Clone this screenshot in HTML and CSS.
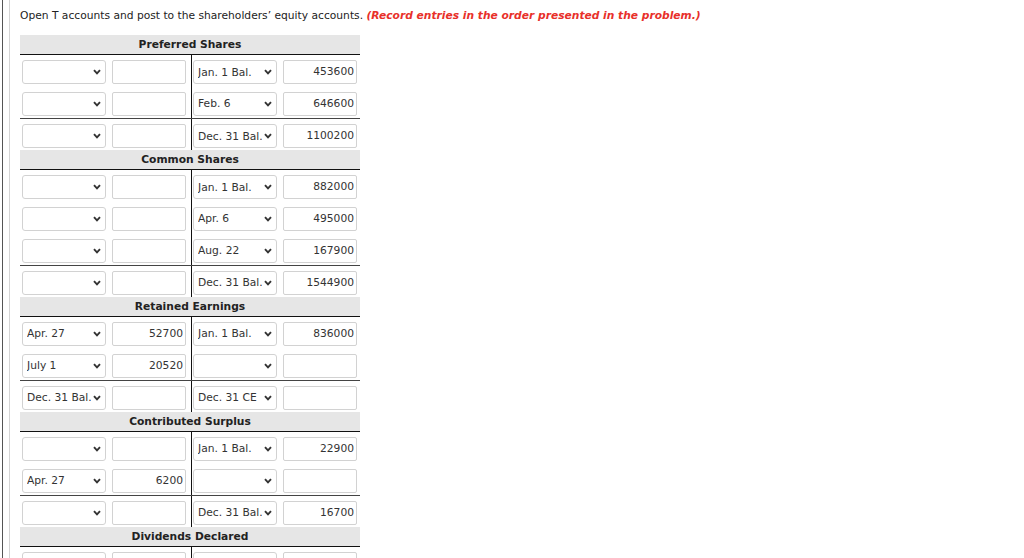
FILE: index.html
```html
<!DOCTYPE html>
<html>
<head>
<meta charset="utf-8">
<link rel="stylesheet" href="styles.css">
</head>
<body>
<div class="frame">
  <div class="panel">
    <p class="prompt">Open T accounts and post to the shareholders’ equity accounts. <em class="note">(Record entries in the order presented in the problem.)</em></p>

    <div class="taccount">
      <div class="title">Preferred Shares</div>
      <div class="row">
        <div class="side left"><div class="sel"><span></span><svg class="chev" viewBox="0 0 8 6"><path d="M1 1.2 4 4.4 7 1.2"/></svg></div><div class="amt"></div></div>
        <div class="side right"><div class="sel"><span>Jan. 1 Bal.</span><svg class="chev" viewBox="0 0 8 6"><path d="M1 1.2 4 4.4 7 1.2"/></svg></div><div class="amt">453600</div></div>
      </div>
      <div class="row">
        <div class="side left"><div class="sel"><span></span><svg class="chev" viewBox="0 0 8 6"><path d="M1 1.2 4 4.4 7 1.2"/></svg></div><div class="amt"></div></div>
        <div class="side right"><div class="sel"><span>Feb. 6</span><svg class="chev" viewBox="0 0 8 6"><path d="M1 1.2 4 4.4 7 1.2"/></svg></div><div class="amt">646600</div></div>
      </div>
      <div class="row total">
        <div class="side left"><div class="sel"><span></span><svg class="chev" viewBox="0 0 8 6"><path d="M1 1.2 4 4.4 7 1.2"/></svg></div><div class="amt"></div></div>
        <div class="side right"><div class="sel"><span>Dec. 31 Bal.</span><svg class="chev" viewBox="0 0 8 6"><path d="M1 1.2 4 4.4 7 1.2"/></svg></div><div class="amt">1100200</div></div>
      </div>
    </div>

    <div class="taccount">
      <div class="title">Common Shares</div>
      <div class="row">
        <div class="side left"><div class="sel"><span></span><svg class="chev" viewBox="0 0 8 6"><path d="M1 1.2 4 4.4 7 1.2"/></svg></div><div class="amt"></div></div>
        <div class="side right"><div class="sel"><span>Jan. 1 Bal.</span><svg class="chev" viewBox="0 0 8 6"><path d="M1 1.2 4 4.4 7 1.2"/></svg></div><div class="amt">882000</div></div>
      </div>
      <div class="row">
        <div class="side left"><div class="sel"><span></span><svg class="chev" viewBox="0 0 8 6"><path d="M1 1.2 4 4.4 7 1.2"/></svg></div><div class="amt"></div></div>
        <div class="side right"><div class="sel"><span>Apr. 6</span><svg class="chev" viewBox="0 0 8 6"><path d="M1 1.2 4 4.4 7 1.2"/></svg></div><div class="amt">495000</div></div>
      </div>
      <div class="row">
        <div class="side left"><div class="sel"><span></span><svg class="chev" viewBox="0 0 8 6"><path d="M1 1.2 4 4.4 7 1.2"/></svg></div><div class="amt"></div></div>
        <div class="side right"><div class="sel"><span>Aug. 22</span><svg class="chev" viewBox="0 0 8 6"><path d="M1 1.2 4 4.4 7 1.2"/></svg></div><div class="amt">167900</div></div>
      </div>
      <div class="row total">
        <div class="side left"><div class="sel"><span></span><svg class="chev" viewBox="0 0 8 6"><path d="M1 1.2 4 4.4 7 1.2"/></svg></div><div class="amt"></div></div>
        <div class="side right"><div class="sel"><span>Dec. 31 Bal.</span><svg class="chev" viewBox="0 0 8 6"><path d="M1 1.2 4 4.4 7 1.2"/></svg></div><div class="amt">1544900</div></div>
      </div>
    </div>

    <div class="taccount">
      <div class="title">Retained Earnings</div>
      <div class="row">
        <div class="side left"><div class="sel"><span>Apr. 27</span><svg class="chev" viewBox="0 0 8 6"><path d="M1 1.2 4 4.4 7 1.2"/></svg></div><div class="amt">52700</div></div>
        <div class="side right"><div class="sel"><span>Jan. 1 Bal.</span><svg class="chev" viewBox="0 0 8 6"><path d="M1 1.2 4 4.4 7 1.2"/></svg></div><div class="amt">836000</div></div>
      </div>
      <div class="row">
        <div class="side left"><div class="sel"><span>July 1</span><svg class="chev" viewBox="0 0 8 6"><path d="M1 1.2 4 4.4 7 1.2"/></svg></div><div class="amt">20520</div></div>
        <div class="side right"><div class="sel"><span></span><svg class="chev" viewBox="0 0 8 6"><path d="M1 1.2 4 4.4 7 1.2"/></svg></div><div class="amt"></div></div>
      </div>
      <div class="row total">
        <div class="side left"><div class="sel"><span>Dec. 31 Bal.</span><svg class="chev" viewBox="0 0 8 6"><path d="M1 1.2 4 4.4 7 1.2"/></svg></div><div class="amt"></div></div>
        <div class="side right"><div class="sel"><span>Dec. 31 CE</span><svg class="chev" viewBox="0 0 8 6"><path d="M1 1.2 4 4.4 7 1.2"/></svg></div><div class="amt"></div></div>
      </div>
    </div>

    <div class="taccount">
      <div class="title">Contributed Surplus</div>
      <div class="row">
        <div class="side left"><div class="sel"><span></span><svg class="chev" viewBox="0 0 8 6"><path d="M1 1.2 4 4.4 7 1.2"/></svg></div><div class="amt"></div></div>
        <div class="side right"><div class="sel"><span>Jan. 1 Bal.</span><svg class="chev" viewBox="0 0 8 6"><path d="M1 1.2 4 4.4 7 1.2"/></svg></div><div class="amt">22900</div></div>
      </div>
      <div class="row">
        <div class="side left"><div class="sel"><span>Apr. 27</span><svg class="chev" viewBox="0 0 8 6"><path d="M1 1.2 4 4.4 7 1.2"/></svg></div><div class="amt">6200</div></div>
        <div class="side right"><div class="sel"><span></span><svg class="chev" viewBox="0 0 8 6"><path d="M1 1.2 4 4.4 7 1.2"/></svg></div><div class="amt"></div></div>
      </div>
      <div class="row total">
        <div class="side left"><div class="sel"><span></span><svg class="chev" viewBox="0 0 8 6"><path d="M1 1.2 4 4.4 7 1.2"/></svg></div><div class="amt"></div></div>
        <div class="side right"><div class="sel"><span>Dec. 31 Bal.</span><svg class="chev" viewBox="0 0 8 6"><path d="M1 1.2 4 4.4 7 1.2"/></svg></div><div class="amt">16700</div></div>
      </div>
    </div>

    <div class="taccount">
      <div class="title">Dividends Declared</div>
      <div class="row">
        <div class="side left"><div class="sel"><span></span><svg class="chev" viewBox="0 0 8 6"><path d="M1 1.2 4 4.4 7 1.2"/></svg></div><div class="amt"></div></div>
        <div class="side right"><div class="sel"><span></span><svg class="chev" viewBox="0 0 8 6"><path d="M1 1.2 4 4.4 7 1.2"/></svg></div><div class="amt"></div></div>
      </div>
    </div>
  </div>
</div>
</body>
</html>
```

FILE: styles.css
```css
html, body {
  margin: 0;
  padding: 0;
  background: #fff;
}
body {
  font-family: "DejaVu Sans", Verdana, sans-serif;
  font-size: 10.7px;
  color: #222;
  height: 558px;
  overflow: hidden;
}
.frame {
  margin-left: 2px;
  border-left: 1px solid #555;
  height: 558px;
  overflow: hidden;
}
.panel {
  margin-left: 6px;
  border-left: 1px solid #d4d4d4;
  padding-left: 10px;
  height: 558px;
}
.prompt {
  margin: 0;
  padding-top: 9px;
  height: 35px;
  box-sizing: border-box;
  line-height: 13px;
  white-space: nowrap;
}
.note {
  color: #e8302a;
  font-weight: bold;
  font-style: italic;
}
.taccount {
  width: 340px;
}
.title {
  background: #e6e6e6;
  height: 19px;
  line-height: 19px;
  text-align: center;
  font-weight: bold;
  border-bottom: 1px solid #111;
}
.row {
  display: grid;
  grid-template-columns: 171px 169px;
  height: 31.67px;
  box-sizing: border-box;
}
.row.total {
  border-top: 1px solid #444;
}
.side {
  display: flex;
  align-items: center;
  padding-top: 3px;
}
.left {
  padding-left: 2px;
}
.right {
  border-left: 1px solid #111;
  padding-left: 1px;
}
.sel {
  width: 84px;
  height: 24px;
  box-sizing: border-box;
  border: 1px solid #d2d2d2;
  border-radius: 3px;
  background: #fff;
  display: flex;
  align-items: center;
  padding: 0 3px 0 4px;
  color: #333;
  white-space: nowrap;
}
.sel span {
  flex: 1;
  overflow: hidden;
}
.chev {
  width: 8px;
  height: 6px;
  flex: none;
  margin-left: 2px;
  margin-right: 1px;
  fill: none;
  stroke: #333;
  stroke-width: 1.9;
}
.amt {
  width: 74px;
  height: 24px;
  box-sizing: border-box;
  border: 1px solid #d2d2d2;
  border-radius: 2px;
  margin-left: 6px;
  text-align: right;
  line-height: 22px;
  padding-right: 2px;
  color: #333;
}
```
